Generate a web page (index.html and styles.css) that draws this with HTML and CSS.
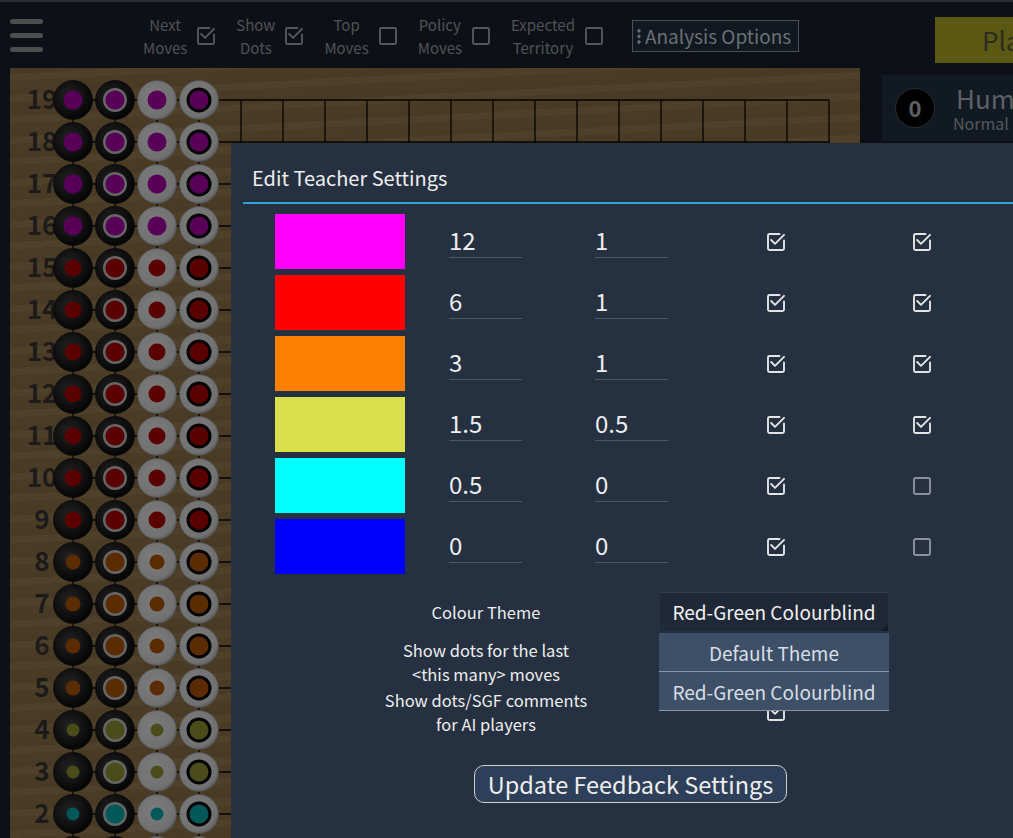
FILE: index.html
```html
<!DOCTYPE html>
<html lang="en">
<head>
<meta charset="utf-8">
<title>Edit Teacher Settings</title>
<link rel="stylesheet" href="styles.css">
</head>
<body>
<div class="app">
  <div class="topline"></div>
  <header class="toolbar">
    <div class="burger"><span></span><span></span><span></span></div>
    <div class="toggles">
      <div class="toggle"><div class="tlabel">Next<br>Moves</div>
        <svg class="cb" viewBox="0 0 18 18"><path d="M12.5 1H2.5A1.5 1.5 0 0 0 1 2.5v13A1.5 1.5 0 0 0 2.5 17h13a1.5 1.5 0 0 0 1.5-1.5V7.5"/><path d="M4.2 7l3.8 3.8L17 1.8"/></svg></div>
      <div class="toggle"><div class="tlabel">Show<br>Dots</div>
        <svg class="cb" viewBox="0 0 18 18"><path d="M12.5 1H2.5A1.5 1.5 0 0 0 1 2.5v13A1.5 1.5 0 0 0 2.5 17h13a1.5 1.5 0 0 0 1.5-1.5V7.5"/><path d="M4.2 7l3.8 3.8L17 1.8"/></svg></div>
      <div class="toggle"><div class="tlabel">Top<br>Moves</div>
        <svg class="cb" viewBox="0 0 18 18"><rect x="1" y="1" width="16" height="16" rx="1.5"/></svg></div>
      <div class="toggle"><div class="tlabel">Policy<br>Moves</div>
        <svg class="cb" viewBox="0 0 18 18"><rect x="1" y="1" width="16" height="16" rx="1.5"/></svg></div>
      <div class="toggle"><div class="tlabel">Expected<br>Territory</div>
        <svg class="cb" viewBox="0 0 18 18"><rect x="1" y="1" width="16" height="16" rx="1.5"/></svg></div>
    </div>
    <div class="analysis"><span class="vdots"></span>Analysis Options</div>
    <div class="play">Play</div>
  </header>

  <main class="main">
    <div class="board">
      <svg class="goban" width="850" height="800" viewBox="0 0 850 800">
        <defs>
          <radialGradient id="gb" cx="0.42" cy="0.4" r="0.62">
            <stop offset="0" stop-color="#242424"/><stop offset="1" stop-color="#040404"/>
          </radialGradient>
          <radialGradient id="gw" cx="0.42" cy="0.4" r="0.62">
            <stop offset="0" stop-color="#7b7b7b"/><stop offset="0.85" stop-color="#717171"/><stop offset="1" stop-color="#5c5c5c"/>
          </radialGradient>
          <g id="row">
            <circle cx="63" cy="0" r="19.5" fill="url(#gb)" stroke="#0b0b0b" stroke-width="0.8"/>
            <circle cx="105" cy="0" r="19.5" fill="url(#gb)" stroke="#0b0b0b" stroke-width="0.8"/>
            <circle cx="105" cy="0" r="10.8" fill="currentColor" stroke="#666" stroke-width="2.4"/>
            <circle cx="147" cy="0" r="19.5" fill="url(#gw)" stroke="#4e4e4e" stroke-width="0.8"/>
            <circle cx="189" cy="0" r="19.5" fill="url(#gw)" stroke="#4e4e4e" stroke-width="0.8"/>
            <circle cx="189" cy="0" r="11" fill="currentColor" stroke="#000" stroke-width="3"/>
          </g>
        </defs>
        <path class="grid" d="M63 32V800M105 32V800M147 32V800M189 32V800M231 32V800M273 32V800M315 32V800M357 32V800M399 32V800M441 32V800M483 32V800M525 32V800M567 32V800M609 32V800M651 32V800M693 32V800M735 32V800M777 32V800M819 32V800M63 32H819M63 74H819M63 116H819M63 158H819M63 200H819M63 242H819M63 284H819M63 326H819M63 368H819M63 410H819M63 452H819M63 494H819M63 536H819M63 578H819M63 620H819M63 662H819M63 704H819M63 746H819M63 788H819"/>

        <g class="r mag" transform="translate(0,32)"><text class="lbl" x="32" y="9">19</text><use href="#row"/><circle cx="63" r="9.5"/><circle cx="147" r="9.5"/></g>
        <g class="r mag" transform="translate(0,74)"><text class="lbl" x="32" y="9">18</text><use href="#row"/><circle cx="63" r="9.5"/><circle cx="147" r="9.5"/></g>
        <g class="r mag" transform="translate(0,116)"><text class="lbl" x="32" y="9">17</text><use href="#row"/><circle cx="63" r="9.5"/><circle cx="147" r="9.5"/></g>
        <g class="r mag" transform="translate(0,158)"><text class="lbl" x="32" y="9">16</text><use href="#row"/><circle cx="63" r="9.5"/><circle cx="147" r="9.5"/></g>
        <g class="r red" transform="translate(0,200)"><text class="lbl" x="32" y="9">15</text><use href="#row"/><circle cx="63" r="8.5"/><circle cx="147" r="8.5"/></g>
        <g class="r red" transform="translate(0,242)"><text class="lbl" x="32" y="9">14</text><use href="#row"/><circle cx="63" r="8.5"/><circle cx="147" r="8.5"/></g>
        <g class="r red" transform="translate(0,284)"><text class="lbl" x="32" y="9">13</text><use href="#row"/><circle cx="63" r="8.5"/><circle cx="147" r="8.5"/></g>
        <g class="r red" transform="translate(0,326)"><text class="lbl" x="32" y="9">12</text><use href="#row"/><circle cx="63" r="8.5"/><circle cx="147" r="8.5"/></g>
        <g class="r red" transform="translate(0,368)"><text class="lbl" x="32" y="9">11</text><use href="#row"/><circle cx="63" r="8.5"/><circle cx="147" r="8.5"/></g>
        <g class="r red" transform="translate(0,410)"><text class="lbl" x="32" y="9">10</text><use href="#row"/><circle cx="63" r="8.5"/><circle cx="147" r="8.5"/></g>
        <g class="r red" transform="translate(0,452)"><text class="lbl" x="32" y="9">9</text><use href="#row"/><circle cx="63" r="8.5"/><circle cx="147" r="8.5"/></g>
        <g class="r org" transform="translate(0,494)"><text class="lbl" x="32" y="9">8</text><use href="#row"/><circle cx="63" r="7.5"/><circle cx="147" r="7.5"/></g>
        <g class="r org" transform="translate(0,536)"><text class="lbl" x="32" y="9">7</text><use href="#row"/><circle cx="63" r="7.5"/><circle cx="147" r="7.5"/></g>
        <g class="r org" transform="translate(0,578)"><text class="lbl" x="32" y="9">6</text><use href="#row"/><circle cx="63" r="7.5"/><circle cx="147" r="7.5"/></g>
        <g class="r org" transform="translate(0,620)"><text class="lbl" x="32" y="9">5</text><use href="#row"/><circle cx="63" r="7.5"/><circle cx="147" r="7.5"/></g>
        <g class="r yel" transform="translate(0,662)"><text class="lbl" x="32" y="9">4</text><use href="#row"/><circle cx="63" r="6.5"/><circle cx="147" r="6.5"/></g>
        <g class="r yel" transform="translate(0,704)"><text class="lbl" x="32" y="9">3</text><use href="#row"/><circle cx="63" r="6.5"/><circle cx="147" r="6.5"/></g>
        <g class="r cya" transform="translate(0,746)"><text class="lbl" x="32" y="9">2</text><use href="#row"/><circle cx="63" r="6.5"/><circle cx="147" r="6.5"/></g>
        <g class="r blu" transform="translate(0,788)"><text class="lbl" x="32" y="9">1</text><use href="#row"/><circle cx="63" r="6"/><circle cx="147" r="6"/></g>
      </svg>
    </div>
    <aside class="side">
      <div class="player">
        <div class="pstone">0</div>
        <div class="pinfo">
          <div class="pname">Human</div>
          <div class="pmode">Normal Game</div>
        </div>
      </div>
    </aside>
  </main>

  <section class="dialog">
    <h1 class="dtitle">Edit Teacher Settings</h1>
    <div class="dline"></div>

    <div class="rows">
      <div class="trow">
        <div class="swatch sw-mag"></div>
        <div class="field f1">12</div>
        <div class="field f2">1</div>
        <div class="cbcell c1"><svg class="cb on" viewBox="0 0 18 18"><path d="M12.5 1H2.5A1.5 1.5 0 0 0 1 2.5v13A1.5 1.5 0 0 0 2.5 17h13a1.5 1.5 0 0 0 1.5-1.5V7.5"/><path d="M4.2 7l3.8 3.8L17 1.8"/></svg></div>
        <div class="cbcell c2"><svg class="cb on" viewBox="0 0 18 18"><path d="M12.5 1H2.5A1.5 1.5 0 0 0 1 2.5v13A1.5 1.5 0 0 0 2.5 17h13a1.5 1.5 0 0 0 1.5-1.5V7.5"/><path d="M4.2 7l3.8 3.8L17 1.8"/></svg></div>
      </div>
      <div class="trow">
        <div class="swatch sw-red"></div>
        <div class="field f1">6</div>
        <div class="field f2">1</div>
        <div class="cbcell c1"><svg class="cb on" viewBox="0 0 18 18"><path d="M12.5 1H2.5A1.5 1.5 0 0 0 1 2.5v13A1.5 1.5 0 0 0 2.5 17h13a1.5 1.5 0 0 0 1.5-1.5V7.5"/><path d="M4.2 7l3.8 3.8L17 1.8"/></svg></div>
        <div class="cbcell c2"><svg class="cb on" viewBox="0 0 18 18"><path d="M12.5 1H2.5A1.5 1.5 0 0 0 1 2.5v13A1.5 1.5 0 0 0 2.5 17h13a1.5 1.5 0 0 0 1.5-1.5V7.5"/><path d="M4.2 7l3.8 3.8L17 1.8"/></svg></div>
      </div>
      <div class="trow">
        <div class="swatch sw-org"></div>
        <div class="field f1">3</div>
        <div class="field f2">1</div>
        <div class="cbcell c1"><svg class="cb on" viewBox="0 0 18 18"><path d="M12.5 1H2.5A1.5 1.5 0 0 0 1 2.5v13A1.5 1.5 0 0 0 2.5 17h13a1.5 1.5 0 0 0 1.5-1.5V7.5"/><path d="M4.2 7l3.8 3.8L17 1.8"/></svg></div>
        <div class="cbcell c2"><svg class="cb on" viewBox="0 0 18 18"><path d="M12.5 1H2.5A1.5 1.5 0 0 0 1 2.5v13A1.5 1.5 0 0 0 2.5 17h13a1.5 1.5 0 0 0 1.5-1.5V7.5"/><path d="M4.2 7l3.8 3.8L17 1.8"/></svg></div>
      </div>
      <div class="trow">
        <div class="swatch sw-yel"></div>
        <div class="field f1">1.5</div>
        <div class="field f2">0.5</div>
        <div class="cbcell c1"><svg class="cb on" viewBox="0 0 18 18"><path d="M12.5 1H2.5A1.5 1.5 0 0 0 1 2.5v13A1.5 1.5 0 0 0 2.5 17h13a1.5 1.5 0 0 0 1.5-1.5V7.5"/><path d="M4.2 7l3.8 3.8L17 1.8"/></svg></div>
        <div class="cbcell c2"><svg class="cb on" viewBox="0 0 18 18"><path d="M12.5 1H2.5A1.5 1.5 0 0 0 1 2.5v13A1.5 1.5 0 0 0 2.5 17h13a1.5 1.5 0 0 0 1.5-1.5V7.5"/><path d="M4.2 7l3.8 3.8L17 1.8"/></svg></div>
      </div>
      <div class="trow">
        <div class="swatch sw-cya"></div>
        <div class="field f1">0.5</div>
        <div class="field f2">0</div>
        <div class="cbcell c1"><svg class="cb on" viewBox="0 0 18 18"><path d="M12.5 1H2.5A1.5 1.5 0 0 0 1 2.5v13A1.5 1.5 0 0 0 2.5 17h13a1.5 1.5 0 0 0 1.5-1.5V7.5"/><path d="M4.2 7l3.8 3.8L17 1.8"/></svg></div>
        <div class="cbcell c2"><svg class="cb off" viewBox="0 0 18 18"><rect x="1" y="1" width="16" height="16" rx="1.5"/></svg></div>
      </div>
      <div class="trow">
        <div class="swatch sw-blu"></div>
        <div class="field f1">0</div>
        <div class="field f2">0</div>
        <div class="cbcell c1"><svg class="cb on" viewBox="0 0 18 18"><path d="M12.5 1H2.5A1.5 1.5 0 0 0 1 2.5v13A1.5 1.5 0 0 0 2.5 17h13a1.5 1.5 0 0 0 1.5-1.5V7.5"/><path d="M4.2 7l3.8 3.8L17 1.8"/></svg></div>
        <div class="cbcell c2"><svg class="cb off" viewBox="0 0 18 18"><rect x="1" y="1" width="16" height="16" rx="1.5"/></svg></div>
      </div>
    </div>

    <div class="opts">
      <div class="orow">
        <div class="olabel">Colour Theme</div>
        <div class="ocell dropwrap">
          <div class="dropbtn">Red-Green Colourblind</div>
          <ul class="droplist">
            <li>Default Theme</li>
            <li>Red-Green Colourblind</li>
          </ul>
        </div>
      </div>
      <div class="orow">
        <div class="olabel">Show dots for the last<br>&lt;this many&gt; moves</div>
        <div class="ocell"></div>
      </div>
      <div class="orow">
        <div class="olabel">Show dots/SGF comments<br>for AI players</div>
        <div class="ocell"><svg class="cb on" viewBox="0 0 18 18"><path d="M12.5 1H2.5A1.5 1.5 0 0 0 1 2.5v13A1.5 1.5 0 0 0 2.5 17h13a1.5 1.5 0 0 0 1.5-1.5V7.5"/><path d="M4.2 7l3.8 3.8L17 1.8"/></svg></div>
      </div>
    </div>

    <button class="update">Update Feedback Settings</button>
  </section>
</div>
</body>
</html>
```

FILE: styles.css
```css
* { box-sizing: border-box; }

html, body {
  margin: 0;
  padding: 0;
  width: 1013px;
  height: 838px;
  overflow: hidden;
  background: #0d1117;
  font-family: "Noto Sans CJK SC", "Noto Sans", sans-serif;
}

.app {
  position: relative;
  width: 1013px;
  height: 838px;
  overflow: hidden;
  background: #0d1117;
}

.topline {
  height: 2px;
  background: #2d2e30;
}

/* ---------- toolbar ---------- */
.toolbar {
  height: 66px;
  display: flex;
  align-items: center;
}

.burger {
  margin-left: 10px;
  width: 33px;
  display: flex;
  flex-direction: column;
  gap: 9px;
}
.burger span {
  display: block;
  height: 5px;
  border-radius: 3px;
  background: #4c4d4f;
}

.toggles {
  display: flex;
  align-items: center;
  gap: 21px;
  margin-left: 100px;
}
.toggle {
  display: flex;
  align-items: center;
  gap: 10px;
}
.tlabel {
  font-size: 15px;
  line-height: 23px;
  text-align: center;
  color: #505256;
  margin-top: 2px;
}
.toggle .cb {
  width: 18px;
  height: 18px;
  margin-top: 2px;
}
.cb {
  display: block;
  fill: none;
  stroke: #56585b;
  stroke-width: 1.9;
  stroke-linecap: round;
  stroke-linejoin: round;
}

.analysis {
  margin-left: 29px;
  height: 32px;
  width: 167px;
  border: 1.5px solid #4b5058;
  background: #111820;
  color: #6b7077;
  font-size: 19px;
  line-height: 28px;
  white-space: nowrap;
  padding-left: 4px;
  margin-top: 2px;
  display: flex;
  align-items: center;
}
.vdots {
  display: inline-block;
  width: 4px;
  height: 16px;
  margin-right: 4px;
  background: radial-gradient(circle, #6b7077 1.4px, transparent 1.8px) 0 0 / 4px 5.6px repeat-y;
  flex: none;
}

.play {
  margin-left: auto;
  width: 78px;
  height: 46px;
  margin-top: 10px;
  background: #5a5812;
  color: #2c2c22;
  font-size: 26px;
  line-height: 46px;
  padding-left: 47px;
  white-space: nowrap;
  overflow: hidden;
}

/* ---------- main ---------- */
.main {
  display: flex;
}

.board {
  margin-left: 10px;
  width: 850px;
  height: 800px;
  background:
    repeating-linear-gradient(177deg, rgba(0,0,0,0.035) 0 6px, rgba(255,255,255,0.02) 6px 13px, rgba(0,0,0,0.02) 13px 21px),
    #4b3c26;
}
.goban { display: block; }
.grid {
  stroke: #050402;
  stroke-width: 1.3;
  fill: none;
}
.lbl {
  fill: #1c1b1a;
  font-family: "Noto Sans CJK SC", "Noto Sans", sans-serif;
  font-weight: 700;
  font-size: 26px;
  text-anchor: middle;
}
.r.mag { color: #580058; fill: #580058; }
.r.red { color: #5a0000; fill: #5a0000; }
.r.org { color: #5a2c00; fill: #5a2c00; }
.r.yel { color: #4a4d1a; fill: #4a4d1a; }
.r.cya { color: #005858; fill: #005858; }
.r.blu { color: #00005a; fill: #00005a; }

.side {
  flex: 1;
  padding: 7px 0 0 22px;
}
.player {
  height: 66px;
  width: 200px;
  background: #111922;
  display: flex;
  align-items: center;
}
.pstone {
  margin-left: 13px;
  width: 40px;
  height: 40px;
  border-radius: 50%;
  background: #000;
  border: 1.5px solid #2c2c2c;
  color: #5f6163;
  font-weight: 700;
  font-size: 22px;
  line-height: 37px;
  text-align: center;
  flex: none;
}
.pinfo {
  margin-left: 21px;
  white-space: nowrap;
}
.pname {
  font-size: 26px;
  line-height: 30px;
  color: #5e6166;
}
.pmode {
  font-size: 16px;
  line-height: 20px;
  color: #55585c;
  margin-left: -3px;
}

/* ---------- dialog ---------- */
.dialog {
  position: absolute;
  left: 231px;
  top: 143px;
  width: 820px;
  height: 720px;
  background: #253040;
  color: #eeeeee;
}

.dtitle {
  margin: 0;
  padding: 20px 0 0 21px;
  height: 50px;
  font-size: 20px;
  line-height: 30px;
  font-weight: 400;
  color: #eeeeee;
}
.dline {
  margin: 9px 0 0 12px;
  height: 2px;
  background: #30a3d8;
}

.rows {
  margin-top: 10px;
  display: flex;
  flex-direction: column;
  gap: 6px;
}
.trow {
  height: 55px;
  display: flex;
  align-items: center;
  padding-left: 44px;
}
.swatch {
  width: 130px;
  height: 55px;
  flex: none;
}
.sw-mag { background: #ff00ff; }
.sw-red { background: #ff0000; }
.sw-org { background: #ff8000; }
.sw-yel { background: #d9e04b; }
.sw-cya { background: #00ffff; }
.sw-blu { background: #0000ff; }

.field {
  width: 73px;
  height: 32px;
  flex: none;
  font-size: 24px;
  line-height: 28px;
  padding-bottom: 3px;
  border-bottom: 1px solid #4b5666;
  color: #eeeeee;
}
.f1 { margin-left: 44px; }
.f2 { margin-left: 73px; }

.cbcell {
  width: 36px;
  flex: none;
  display: flex;
  justify-content: center;
}
.c1 { margin-left: 90px; }
.c2 { margin-left: 110px; }
.cbcell .cb, .ocell .cb {
  width: 18px;
  height: 18px;
}
.cb.on { stroke: #e4e4e4; }
.cb.off { stroke: #8b929b; }

.opts {
  margin-top: 13px;
  display: flex;
  flex-direction: column;
}
.orow {
  height: 50px;
  display: flex;
  align-items: center;
}
.olabel {
  margin-left: 105px;
  width: 300px;
  text-align: center;
  font-size: 16.5px;
  line-height: 24px;
  color: #eeeeee;
}
.ocell {
  margin-left: 24px;
  width: 232px;
  display: flex;
  justify-content: center;
  position: relative;
}

.dropwrap { display: block; }
.dropbtn {
  width: 228px;
  height: 39px;
  background: #1f2836;
  border-top: 1px solid #323d4c;
  color: #f2f2f2;
  font-size: 19px;
  line-height: 37px;
  text-align: center;
  position: relative;
  margin-top: -2px;
}
.dropbtn::after {
  content: "";
  position: absolute;
  right: 0;
  bottom: 0;
  border-style: solid;
  border-width: 0 0 7px 7px;
  border-color: transparent transparent #141b25 transparent;
}
.droplist {
  position: absolute;
  left: -1px;
  top: 39px;
  width: 230px;
  margin: 0;
  padding: 0;
  list-style: none;
  background: #3d5068;
  z-index: 2;
}
.droplist li {
  height: 39px;
  border-bottom: 1px solid #8c97a5;
  text-align: center;
  font-size: 19px;
  line-height: 40px;
  color: #d9dee4;
}

.update {
  display: block;
  margin: 28px 0 0 243px;
  width: 313px;
  height: 38px;
  border: 1.5px solid #cfcfcf;
  border-radius: 10px;
  background: #2e4059;
  color: #eeeeee;
  font-family: "Noto Sans CJK SC", "Noto Sans", sans-serif;
  font-size: 23.5px;
  line-height: 37px;
  padding: 0;
}
```
